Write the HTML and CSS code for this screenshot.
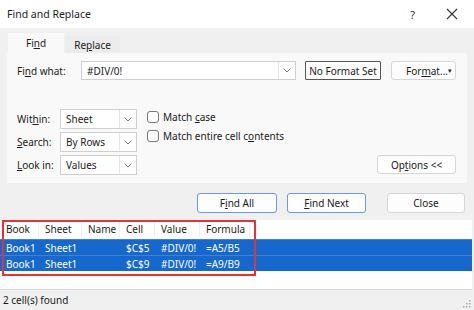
FILE: index.html
```html
<!DOCTYPE html>
<html lang="en">
<head>
  <meta charset="UTF-8" />
  <title>Find and Replace</title>
  <link rel="stylesheet" href="styles.css">
</head>
<body>
  <div class="dialog">
    <div class="titlebar">
      <span class="title">Find and Replace</span>
      <div class="title-icons">
        <span class="help">?</span>
        <svg class="close-x" width="12" height="12" viewBox="0 0 12 12">
          <path d="M1 1 L11 11 M11 1 L1 11" stroke="#333" stroke-width="1.1" fill="none" />
        </svg>
      </div>
    </div>

    <div class="main">
      <div class="tabs">
        <div class="tab active">Fi<u>n</u>d</div>
        <div class="tab">Re<u>p</u>lace</div>
      </div>

      <div class="panel">
        <div class="find-row">
          <span class="find-label">Fi<u>n</u>d what:</span>
          <div class="combo wide">
            <span class="combo-text">#DIV/0!</span>
            <span class="combo-arrow">
              <svg width="8" height="5" viewBox="0 0 8 5"><polyline points="0.5,0.5 4,4 7.5,0.5" stroke="#777" fill="none" /></svg>
            </span>
          </div>
          <button class="btn no-format">No Format Set</button>
          <button class="btn format"><span>For<u>m</u>at...</span><span class="caret">▾</span></button>
        </div>

        <div class="options">
          <div class="selects">
            <div class="select-row">
              <span class="opt-label">Wit<u>h</u>in:</span>
              <div class="combo">
                <span class="combo-text">Sheet</span>
                <span class="combo-arrow">
                  <svg width="8" height="5" viewBox="0 0 8 5"><polyline points="0.5,0.5 4,4 7.5,0.5" stroke="#777" fill="none" /></svg>
                </span>
              </div>
            </div>
            <div class="select-row">
              <span class="opt-label"><u>S</u>earch:</span>
              <div class="combo">
                <span class="combo-text">By Rows</span>
                <span class="combo-arrow">
                  <svg width="8" height="5" viewBox="0 0 8 5"><polyline points="0.5,0.5 4,4 7.5,0.5" stroke="#777" fill="none" /></svg>
                </span>
              </div>
            </div>
            <div class="select-row">
              <span class="opt-label"><u>L</u>ook in:</span>
              <div class="combo">
                <span class="combo-text">Values</span>
                <span class="combo-arrow">
                  <svg width="8" height="5" viewBox="0 0 8 5"><polyline points="0.5,0.5 4,4 7.5,0.5" stroke="#777" fill="none" /></svg>
                </span>
              </div>
            </div>
          </div>

          <div class="checks">
            <label class="check"><span class="box"></span><span>Match <u>c</u>ase</span></label>
            <label class="check"><span class="box"></span><span>Match entire cell c<u>o</u>ntents</span></label>
          </div>

          <div class="options-btn-wrap">
            <button class="btn options-btn">Op<u>t</u>ions &lt;&lt;</button>
          </div>
        </div>
      </div>

      <div class="actions">
        <button class="btn blue find-all">F<u>i</u>nd All</button>
        <button class="btn blue find-next"><u>F</u>ind Next</button>
        <button class="btn close-btn">Close</button>
      </div>
    </div>

    <div class="results">
      <div class="row head">
        <span class="c-book">Book</span>
        <span class="c-sheet">Sheet</span>
        <span class="c-name">Name</span>
        <span class="c-cell">Cell</span>
        <span class="c-value">Value</span>
        <span class="c-formula">Formula</span>
      </div>
      <div class="row sel">
        <span class="c-book">Book1</span>
        <span class="c-sheet">Sheet1</span>
        <span class="c-name"></span>
        <span class="c-cell">$C$5</span>
        <span class="c-value">#DIV/0!</span>
        <span class="c-formula">=A5/B5</span>
      </div>
      <div class="row sel">
        <span class="c-book">Book1</span>
        <span class="c-sheet">Sheet1</span>
        <span class="c-name"></span>
        <span class="c-cell">$C$9</span>
        <span class="c-value">#DIV/0!</span>
        <span class="c-formula">=A9/B9</span>
      </div>
      <div class="highlight"></div>
    </div>

    <div class="status">
      <span>2 cell(s) found</span>
      <svg class="grip" width="10" height="10" viewBox="0 0 10 10">
        <rect x="8" y="2" width="1.5" height="1.5" fill="#aaa" />
        <rect x="5" y="5" width="1.5" height="1.5" fill="#aaa" />
        <rect x="8" y="5" width="1.5" height="1.5" fill="#aaa" />
        <rect x="2" y="8" width="1.5" height="1.5" fill="#aaa" />
        <rect x="5" y="8" width="1.5" height="1.5" fill="#aaa" />
        <rect x="8" y="8" width="1.5" height="1.5" fill="#aaa" />
      </svg>
    </div>
  </div>
</body>
</html>
```

FILE: styles.css
```css
body {
  margin: 0;
  background: #f0f0f0;
  font-family: 'Noto Sans', 'Open Sans', sans-serif;
  font-size: 10px;
  color: #1a1a1a;
}
u {
  text-decoration-thickness: 1px;
  text-underline-offset: 1px;
}
.dialog {
  width: 474px;
  height: 310px;
  display: flex;
  flex-direction: column;
  overflow: hidden;
}
.titlebar {
  height: 28px;
  background: #fff;
  display: flex;
  align-items: center;
  justify-content: space-between;
  padding: 0 16px 0 7px;
}
.title {
  font-size: 10.5px;
}
.title-icons {
  display: flex;
  align-items: center;
  gap: 31px;
}
.help {
  font-size: 11px;
  color: #333;
}
.main {
  padding: 5px 7px 0 7px;
}
.tabs {
  display: flex;
  align-items: flex-end;
  height: 20px;
  padding-left: 1px;
}
.tab {
  height: 17px;
  width: 55px;
  background: #ececec;
  display: flex;
  align-items: center;
  justify-content: center;
  margin-left: 1px;
}
.tab.active {
  height: 20px;
  width: 56px;
  background: #f9f9f9;
  margin-left: 0;
}
.panel {
  background: #f9f9f9;
  height: 130px;
  box-sizing: border-box;
  padding: 8px 11px 0 10px;
}
.find-row {
  display: flex;
  align-items: center;
}
.find-label {
  width: 64px;
}
.combo {
  height: 20px;
  width: 77px;
  box-sizing: border-box;
  background: #fff;
  border: 1px solid #cfcfcf;
  display: flex;
  align-items: center;
}
.combo.wide {
  width: 215px;
  height: 19px;
}
.combo-text {
  flex: 1;
  padding-left: 5px;
}
.combo-arrow {
  width: 16px;
  height: 100%;
  border-left: 1px solid #e6e6e6;
  display: flex;
  align-items: center;
  justify-content: center;
}
.btn {
  font-family: inherit;
  font-size: 10px;
  color: #1a1a1a;
  background: #fdfdfd;
  border: 1px solid #d6d6d6;
  border-radius: 3px;
  height: 20px;
  padding: 0;
}
.no-format {
  width: 76px;
  height: 19px;
  margin-left: 9px;
  border: 1px solid #555;
  border-radius: 1px;
}
.format {
  width: 65px;
  height: 19px;
  margin-left: 10px;
  display: flex;
  align-items: center;
  justify-content: space-between;
  padding: 0 4px 0 14px;
}
.caret {
  font-size: 7px;
}
.options {
  display: flex;
  margin-top: 29px;
}
.selects {
  display: flex;
  flex-direction: column;
  gap: 3px;
}
.select-row {
  display: flex;
  align-items: center;
}
.opt-label {
  width: 43px;
}
.checks {
  display: flex;
  flex-direction: column;
  gap: 5px;
  margin-left: 10px;
  padding-top: 1px;
}
.check {
  display: flex;
  align-items: center;
  gap: 4px;
  height: 14px;
}
.box {
  width: 12px;
  height: 12px;
  box-sizing: border-box;
  border: 1px solid #777;
  border-radius: 3px;
  background: #fff;
}
.options-btn-wrap {
  flex: 1;
  display: flex;
  justify-content: flex-end;
  align-items: flex-end;
  padding-bottom: 1px;
}
.options-btn {
  width: 79px;
  height: 19px;
}
.actions {
  display: flex;
  justify-content: flex-end;
  padding: 10px 2px 0 0;
}
.actions .btn {
  height: 20px;
}
.blue {
  border-color: #6d9ad6;
}
.find-all {
  width: 80px;
}
.find-next {
  width: 79px;
  margin-left: 10px;
}
.close-btn {
  width: 78px;
  margin-left: 21px;
}
.results {
  margin-top: 7px;
  width: 472px;
  height: 69px;
  background: #fff;
  position: relative;
  border-bottom: 1px solid #d8d8d8;
}
.row {
  display: flex;
  align-items: center;
  height: 15px;
}
.row.head {
  height: 19px;
}
.row span {
  box-sizing: border-box;
  padding-left: 6px;
}
.row.head span {
  border-right: 1px solid #efefef;
  line-height: 15px;
}
.row.sel {
  background: #1668cc;
  color: #fff;
  border-top: 1px solid #3f82d4;
}
.c-book { width: 39px; }
.c-sheet { width: 43px; }
.c-name { width: 38px; }
.c-cell { width: 35px; }
.c-value { width: 45px; }
.c-formula { width: 50px; }
.highlight {
  position: absolute;
  left: 2px;
  top: 0;
  width: 254px;
  height: 56px;
  box-sizing: border-box;
  border: 2px solid #e8323a;
}
.status {
  flex: 1;
  display: flex;
  align-items: center;
  justify-content: space-between;
  padding: 0 3px 0 3px;
}
.grip {
  align-self: flex-end;
  margin-bottom: 2px;
}
```
